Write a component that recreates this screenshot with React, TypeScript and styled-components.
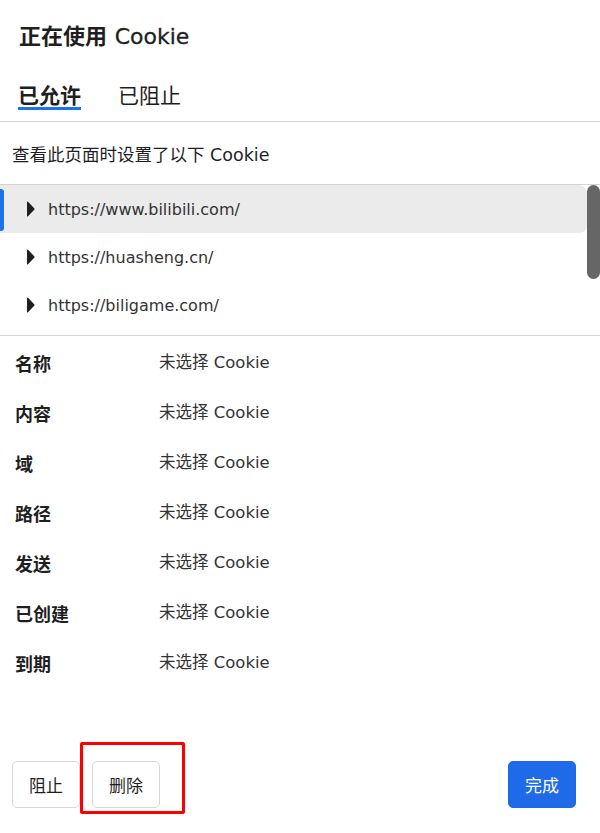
import React from 'react'
import styled, { createGlobalStyle } from 'styled-components'

const GlobalStyle = createGlobalStyle`
    html, body {
        margin: 0;
        padding: 0;
        background: #fff;
    }
    body {
        font-family: 'DejaVu Sans', 'Noto Sans CJK SC', sans-serif;
        color: #202124;
    }
`

const Dialog = styled.div`
    width: 600px;
    height: 833px;
    display: flex;
    flex-direction: column;
    background: #fff;
    overflow: hidden;
`

const Title = styled.h1`
    margin: 0;
    padding: 23px 19px 0;
    font-size: 22px;
    line-height: 28px;
    font-weight: 700;
    color: #1f1f1f;
`

const TitleLatin = styled.span`
    font-weight: 400;
    font-size: 22px;
    -webkit-text-stroke: 0.3px #1f1f1f;
`

const Tabs = styled.div`
    display: flex;
    gap: 37px;
    padding: 34px 18px 0;
    border-bottom: 1px solid #d3d3d3;
`

const Tab = styled.div<{ $active?: boolean }>`
    font-size: 21px;
    line-height: 22px;
    font-weight: ${p => (p.$active ? 700 : 400)};
    color: #1f1f1f;
    border-bottom: 3px solid ${p => (p.$active ? '#1a73e8' : 'transparent')};
    margin-bottom: 11px;
`

const Intro = styled.p`
    margin: 0;
    padding: 22px 12px 18px;
    font-size: 17.5px;
    line-height: 22px;
    color: #1f1f1f;
`

const TreeBox = styled.div`
    position: relative;
    border-top: 1px solid #d3d3d3;
    border-bottom: 1px solid #d3d3d3;
    height: 150px;
    padding-right: 13px;
`

const TreeRow = styled.div<{ $selected?: boolean }>`
    position: relative;
    display: flex;
    align-items: center;
    height: 48px;
    padding-left: 26px;
    gap: 13px;
    font-size: 16px;
    color: #333;
    background: ${p => (p.$selected ? '#ebebeb' : 'transparent')};
    border-radius: 0 8px 8px 0;

    &::before {
        content: '';
        display: ${p => (p.$selected ? 'block' : 'none')};
        position: absolute;
        left: 0;
        top: 4px;
        bottom: 2px;
        width: 4px;
        border-radius: 0 3px 3px 0;
        background: #1a73e8;
    }
`

const Scrollbar = styled.div`
    position: absolute;
    right: 0;
    top: 0;
    width: 13px;
    height: 94px;
    border-radius: 7px;
    background: #666;
`

const Details = styled.div`
    display: flex;
    flex-direction: column;
    padding: 0 0 0 15px;
`

const DetailRow = styled.div`
    display: grid;
    grid-template-columns: 144px 1fr;
    align-items: center;
    height: 50px;
`

const Label = styled.div`
    font-size: 18px;
    font-weight: 700;
    color: #1f1f1f;
    padding-top: 3px;
`

const Value = styled.div`
    font-size: 16.5px;
    color: #333;
    margin-top: -1px;
`

const Footer = styled.div`
    margin-top: auto;
    display: flex;
    align-items: center;
    padding: 0 24px 25px 12px;
`

const Button = styled.button<{ $primary?: boolean }>`
    height: 47px;
    min-width: 68px;
    padding: 0 14px;
    font-family: inherit;
    font-size: 17px;
    border-radius: 5px;
    border: 1px solid ${p => (p.$primary ? '#1a6ae6' : '#d6d6d6')};
    background: ${p => (p.$primary ? '#1f6ae8' : '#fff')};
    color: ${p => (p.$primary ? '#fff' : '#1f1f1f')};
`

const Highlight = styled.div`
    position: relative;
    margin-left: 12px;

    &::after {
        content: '';
        position: absolute;
        left: -12px;
        top: -19px;
        width: 99px;
        height: 66px;
        border: 3px solid #ff0000;
        border-radius: 2px;
    }
`

const Spacer = styled.div`
    flex: 1;
`

const Arrow = () => (
    <svg width="9" height="16" viewBox="0 0 9 16">
        <path d="M1 1 Q1 0 2 0.8 L8.2 7.2 Q9 8 8.2 8.8 L2 15.2 Q1 16 1 15 Z" fill="#1f1f1f" />
    </svg>
)

const sites = ['https://www.bilibili.com/', 'https://huasheng.cn/', 'https://biligame.com/']
const fields = ['名称', '内容', '域', '路径', '发送', '已创建', '到期']

export default function App() {
    return (
        <>
            <GlobalStyle />
            <Dialog>
                <Title>
                    正在使用 <TitleLatin>Cookie</TitleLatin>
                </Title>
                <Tabs>
                    <Tab $active>已允许</Tab>
                    <Tab>已阻止</Tab>
                </Tabs>
                <Intro>查看此页面时设置了以下 Cookie</Intro>
                <TreeBox>
                    {sites.map((s, i) => (
                        <TreeRow key={s} $selected={i === 0}>
                            <Arrow />
                            {s}
                        </TreeRow>
                    ))}
                    <Scrollbar />
                </TreeBox>
                <Details>
                    {fields.map(f => (
                        <DetailRow key={f}>
                            <Label>{f}</Label>
                            <Value>未选择 Cookie</Value>
                        </DetailRow>
                    ))}
                </Details>
                <Footer>
                    <Button>阻止</Button>
                    <Highlight>
                        <Button>删除</Button>
                    </Highlight>
                    <Spacer />
                    <Button $primary>完成</Button>
                </Footer>
            </Dialog>
        </>
    )
}
